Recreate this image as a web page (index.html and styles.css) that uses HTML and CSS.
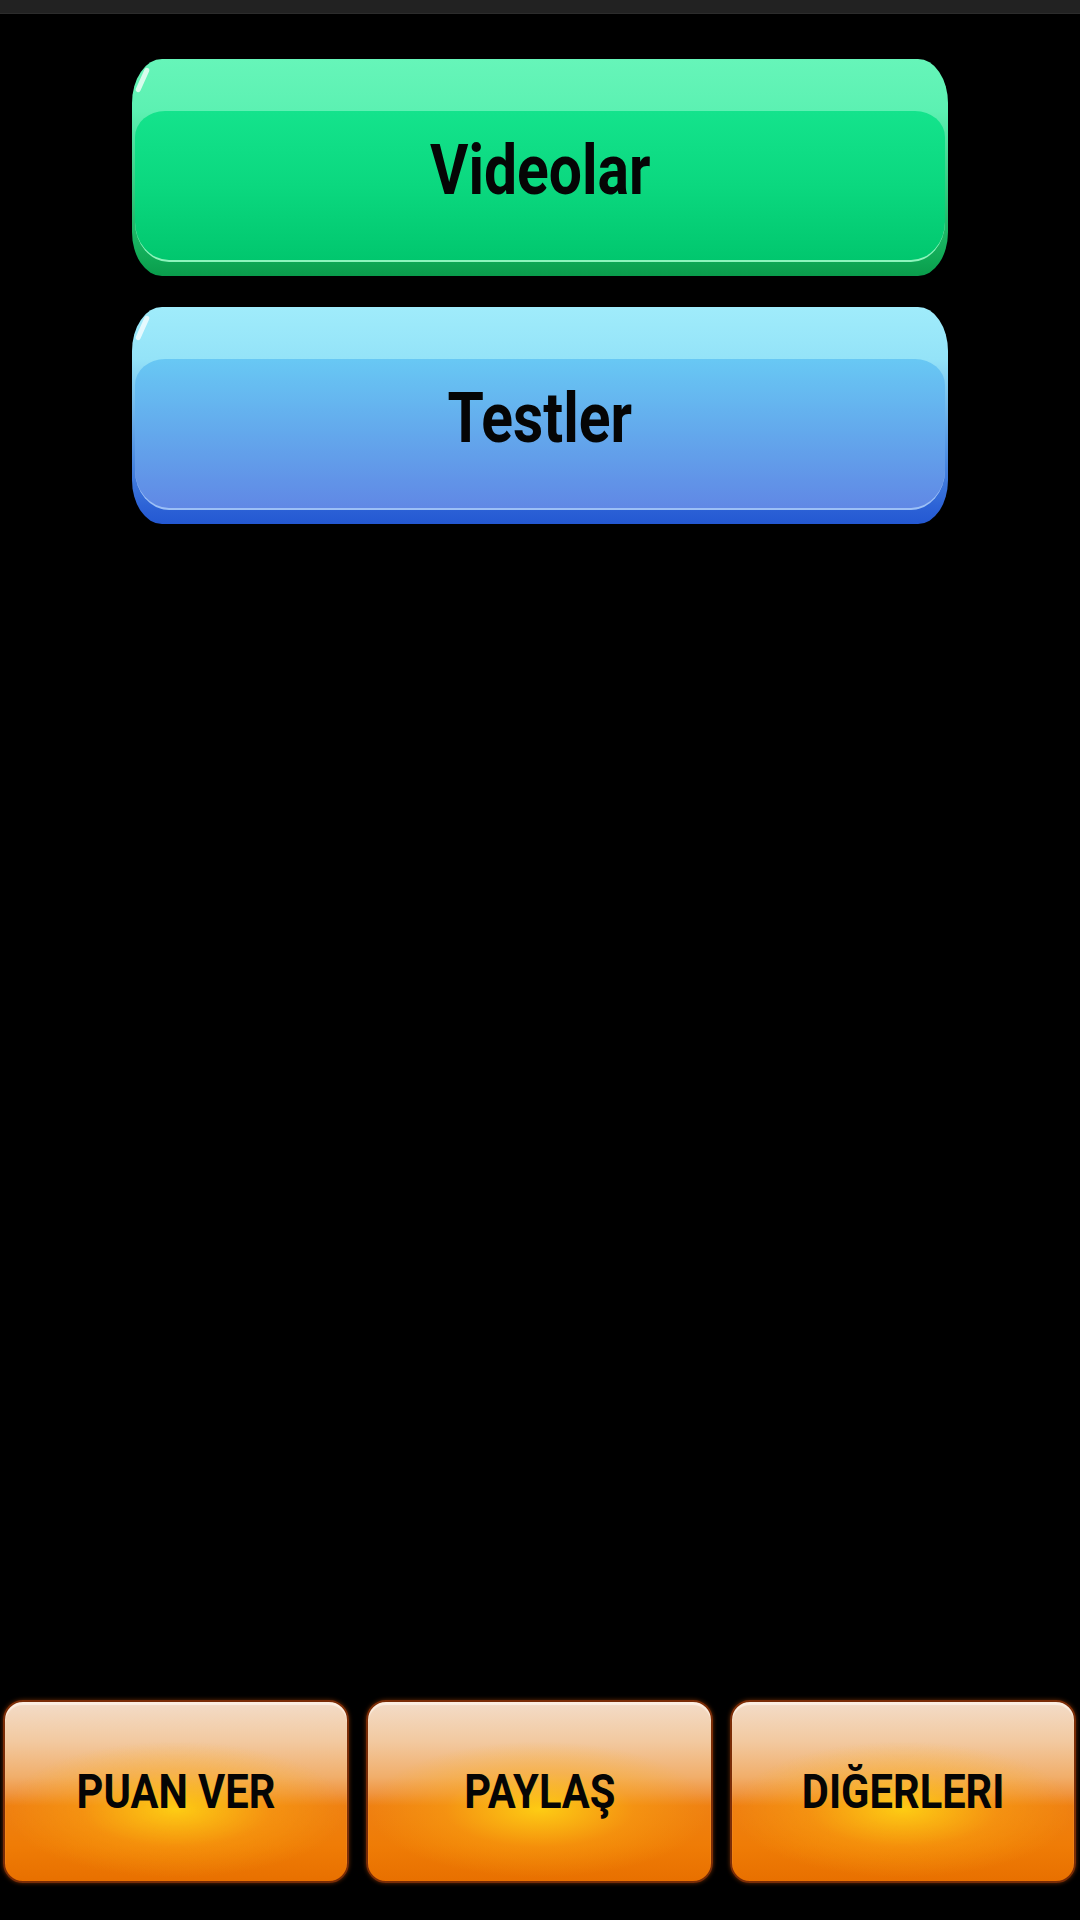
FILE: index.html
```html
<!DOCTYPE html>
<html lang="tr">
<head>
  <meta charset="UTF-8" />
  <meta name="viewport" content="width=device-width, initial-scale=1.0"/>
  <title>Videolar ve Testler</title>
  <link rel="stylesheet" href="styles.css">
</head>
<body>
<div class="status-bar"></div>

<div class="menu">
  <button class="menu-btn green"><span class="label">Videolar</span></button>
  <button class="menu-btn blue"><span class="label">Testler</span></button>
</div>

<div class="footer">
  <button class="foot-btn"><span class="label">PUAN VER</span></button>
  <button class="foot-btn"><span class="label">PAYLAŞ</span></button>
  <button class="foot-btn"><span class="label">DIĞERLERI</span></button>
</div>
</body>
</html>
```

FILE: styles.css
```css
* { box-sizing: border-box; }
html, body { height: 100%; }
body {
  margin: 0;
  background: #000;
  font-family: Roboto, "Liberation Sans", Arial, sans-serif;
  display: flex;
  flex-direction: column;
  overflow: hidden;
}
.status-bar {
  height: 14px;
  background: #222;
  border-bottom: 1px solid #2c2c2c;
  flex: none;
}
button {
  font-family: inherit;
  border: none;
  padding: 0;
  cursor: pointer;
  color: #050505;
}
.label {
  display: inline-block;
  font-weight: 700;
  position: relative;
  z-index: 1;
}

/* top menu */
.menu {
  display: flex;
  flex-direction: column;
  gap: 31px;
  padding: 45px 132px 0;
}
.menu-btn {
  position: relative;
  height: 217px;
  border-radius: 30px / 44px;
  overflow: hidden;
  display: flex;
  align-items: center;
  justify-content: center;
  padding-top: 4px;
}
.menu-btn::before {
  content: "";
  position: absolute;
  top: 52px;
  left: 3px;
  right: 3px;
  bottom: 14px;
  border-radius: 30px 30px 34px 34px / 26px 26px 40px 40px;
}
.menu-btn::after {
  content: "";
  position: absolute;
  top: 8px;
  left: 8px;
  width: 5px;
  height: 26px;
  border-radius: 3px;
  background: rgba(255,255,255,0.75);
  transform: rotate(24deg);
}
.menu-btn .label {
  font-size: 70px;
  transform: scaleX(0.84);
}
.green {
  background: linear-gradient(to bottom, #66f5b9 0, #5cf1b2 52px, #0fa955 200px, #0a9c4c 100%);
}
.green::before {
  background: linear-gradient(to bottom, #14e38c 0%, #0bd87f 50%, #01c76e 100%);
  border-bottom: 2px solid #8ef4bc;
}
.blue {
  background: linear-gradient(to bottom, #a0ecfb 0, #94e3f8 52px, #2c62d6 200px, #2458d2 100%);
}
.blue::before {
  background: linear-gradient(to bottom, #68c8f4 0%, #63a8ec 50%, #6088e5 100%);
  border-bottom: 2px solid #9cc0f6;
}

/* bottom bar */
.footer {
  margin-top: auto;
  display: flex;
  gap: 17px;
  padding: 0 4px 37px 3px;
}
.foot-btn {
  flex: 1;
  height: 183px;
  border-radius: 20px;
  border: 2px solid #7a2c06;
  box-shadow: 0 0 4px rgba(170,70,10,0.6), inset 0 3px 1px rgba(255,245,235,0.7);
  background:
    radial-gradient(ellipse 50% 38% at 50% 60%, rgba(255,212,20,0.9), rgba(255,180,20,0.35) 55%, rgba(255,160,20,0) 100%),
    linear-gradient(to bottom, #f3dcc8 0%, #f2c9a0 22%, #f1ae6a 42%, #f09540 51%, #ef8012 58%, #ef7c06 80%, #e87000 100%);
  display: flex;
  align-items: center;
  justify-content: center;
}
.foot-btn .label {
  font-size: 49px;
  transform: scaleX(0.85);
}
```
